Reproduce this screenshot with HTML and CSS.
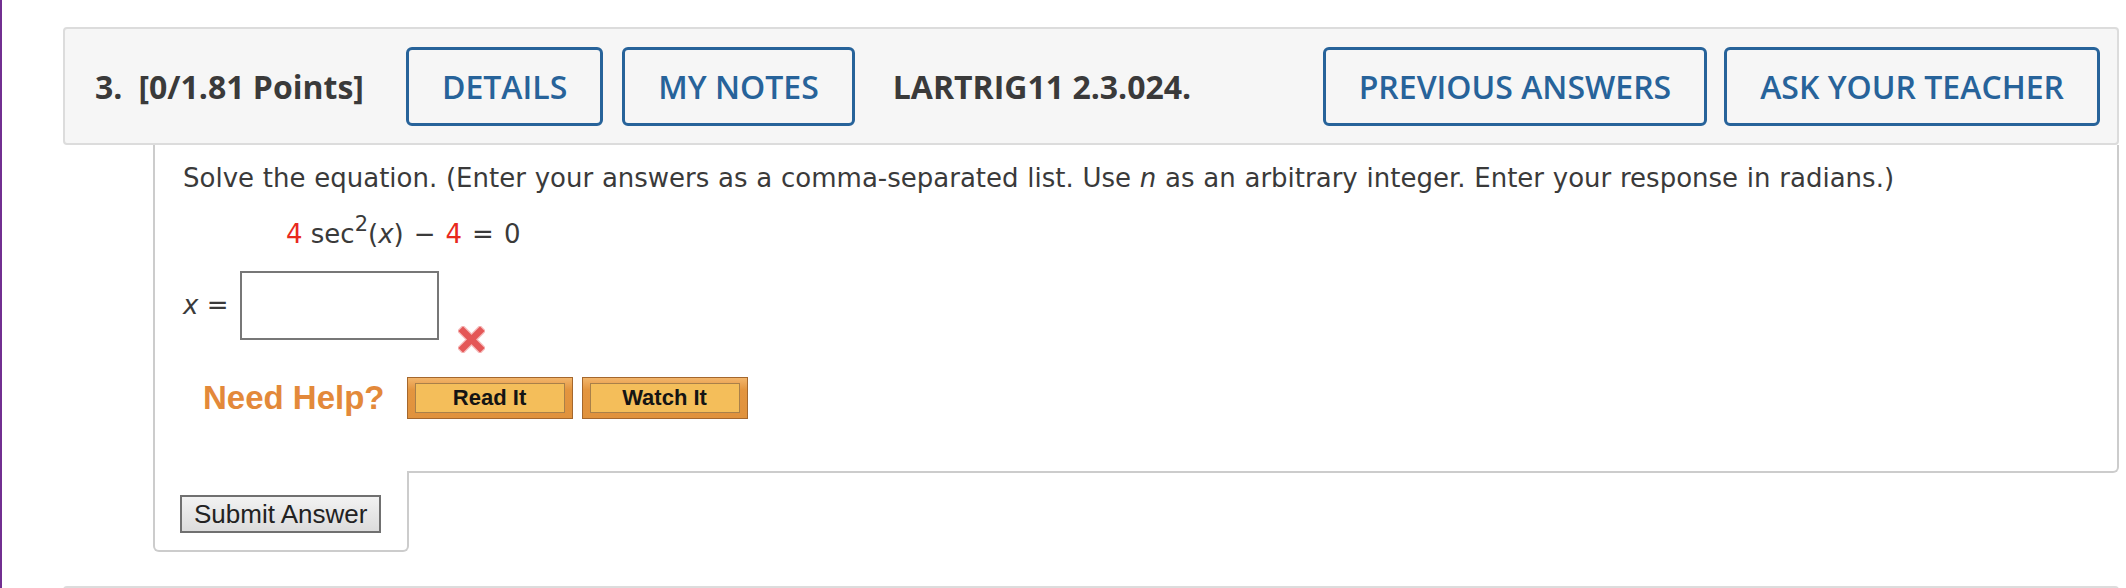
FILE: index.html
```html
<!DOCTYPE html>
<html lang="en">
<head>
<meta charset="utf-8">
<title>Question 3</title>
<link rel="stylesheet" href="styles.css">
</head>
<body>
<div class="page">
  <div class="question">
    <div class="q-header">
      <span class="q-title"><span class="q-num">3.</span>[0/1.81 Points]</span>
      <button class="hbtn hbtn-first" type="button">DETAILS</button>
      <button class="hbtn" type="button">MY NOTES</button>
      <span class="q-code">LARTRIG11 2.3.024.</span>
      <div class="hright">
        <button class="hbtn" type="button">PREVIOUS ANSWERS</button>
        <button class="hbtn" type="button">ASK YOUR TEACHER</button>
      </div>
    </div>
    <div class="q-body">
      <div class="content">
        <p class="prompt">Solve the equation. (Enter your answers as a comma-separated list. Use <i>n</i> as an arbitrary integer. Enter your response in radians.)</p>
        <div class="equation"><span class="red">4</span> sec<sup>2</sup>(<i>x</i>)<span class="op">−</span><span class="red">4</span><span class="op">=</span>0</div>
        <div class="answer-row">
          <span class="var"><i>x</i> =</span>
          <input class="answer" type="text" aria-label="x">
          <svg class="wrong" width="27" height="27" viewBox="0 0 27 27" aria-hidden="true">
            <path d="M5 5 L22 22 M22 5 L5 22" stroke="#f3a6a6" stroke-width="9" stroke-linecap="square" opacity="0.75"/>
            <path d="M5 5 L22 22 M22 5 L5 22" stroke="#e45757" stroke-width="6.5" stroke-linecap="square"/>
          </svg>
        </div>
        <div class="help-row">
          <span class="need-help">Need Help?</span>
          <button class="help-btn" type="button"><span>Read It</span></button>
          <button class="help-btn" type="button"><span>Watch It</span></button>
        </div>
      </div>
      <div class="submit-tab">
        <button class="submit" type="button">Submit Answer</button>
      </div>
    </div>
  </div>
  <div class="question">
    <div class="q-header q-next"></div>
  </div>
</div>
</body>
</html>
```
FILE: styles.css
```css
html, body {
  margin: 0;
  padding: 0;
  overflow: hidden;
  background: #ffffff;
}

.page {
  min-height: 100vh;
  box-sizing: border-box;
  border-left: 2px solid #722f91;
  padding: 27px 7px 0 61px;
}

.q-header {
  height: 118px;
  box-sizing: border-box;
  display: flex;
  align-items: center;
  background: #f6f6f6;
  border: 2px solid #dcdcdc;
  border-radius: 4px;
  padding: 0 17px 0 30px;
  font-family: "Open Sans", "DejaVu Sans", sans-serif;
}

.q-title,
.q-code {
  font-size: 32px;
  font-weight: 700;
  color: #3a3a3a;
  white-space: nowrap;
}

.q-num {
  margin-right: 16px;
}

.q-code {
  margin-left: 38px;
}

.hbtn {
  height: 79px;
  box-sizing: border-box;
  border: 3px solid #27639a;
  border-radius: 6px;
  background: transparent;
  color: #27639a;
  font-family: "Open Sans", "DejaVu Sans", sans-serif;
  font-size: 32px;
  font-weight: 600;
  padding: 0 33px;
  margin-left: 19px;
  white-space: nowrap;
}

.hbtn-first {
  margin-left: 42px;
}

.hright {
  margin-left: auto;
  display: flex;
}

.hright .hbtn + .hbtn {
  margin-left: 17px;
}

.q-body {
  margin-left: 90px;
}

.content {
  border: 2px solid #cccccc;
  border-top: none;
  border-bottom-right-radius: 6px;
  padding: 15px 28px 52px;
  font-family: Verdana, "DejaVu Sans", sans-serif;
  font-size: 26px;
  color: #3a3a3a;
}

.prompt {
  margin: 0;
  line-height: 36px;
  word-spacing: 0.5px;
}

.equation {
  margin: 20px 0 0 103px;
  line-height: 36px;
}

.equation sup {
  font-size: 21px;
  line-height: 0;
  vertical-align: 12px;
}

.red {
  color: #e8291d;
}

.op {
  margin: 0 10px;
}

.answer-row {
  display: flex;
  align-items: flex-start;
  margin-top: 19px;
}

.var {
  white-space: nowrap;
  line-height: 69px;
}

.answer {
  width: 199px;
  height: 69px;
  box-sizing: border-box;
  margin: 0 0 0 12px;
  border: 2px solid #777777;
  background: #ffffff;
  padding: 0 8px;
  font-size: 24px;
}

.wrong {
  margin: 55px 0 0 19px;
}

.help-row {
  display: flex;
  align-items: center;
  margin-top: 24px;
  padding-left: 20px;
}

.need-help {
  font-family: "Liberation Sans", Arial, sans-serif;
  font-weight: 700;
  font-size: 33px;
  color: #e3893a;
  margin-right: 22px;
}

.help-btn {
  width: 166px;
  height: 42px;
  box-sizing: border-box;
  border: 1px solid #a4672d;
  background: linear-gradient(#f2b56b, #e3953f 30%, #e0923d);
  padding: 5px 7px;
  margin: 0 9px 0 0;
  cursor: pointer;
}

.help-btn span {
  display: flex;
  height: 100%;
  box-sizing: border-box;
  align-items: center;
  justify-content: center;
  border: 1px solid #a98049;
  background: #f4be5a;
  font-family: "Liberation Sans", Arial, sans-serif;
  font-weight: 700;
  font-size: 22px;
  color: #141414;
}

.submit-tab {
  width: 256px;
  box-sizing: border-box;
  margin-top: -2px;
  background: #ffffff;
  border: 2px solid #cccccc;
  border-top: none;
  border-radius: 0 0 6px 6px;
  padding: 24px 0 17px 25px;
}

.submit {
  height: 38px;
  box-sizing: border-box;
  border: 2px solid #707070;
  background: linear-gradient(#f2f2f2, #dcdcdc);
  color: #222222;
  font-family: "Liberation Sans", Arial, sans-serif;
  font-size: 26px;
  padding: 0 12px;
  line-height: 1;
}

.q-next {
  margin-top: 34px;
}
```
